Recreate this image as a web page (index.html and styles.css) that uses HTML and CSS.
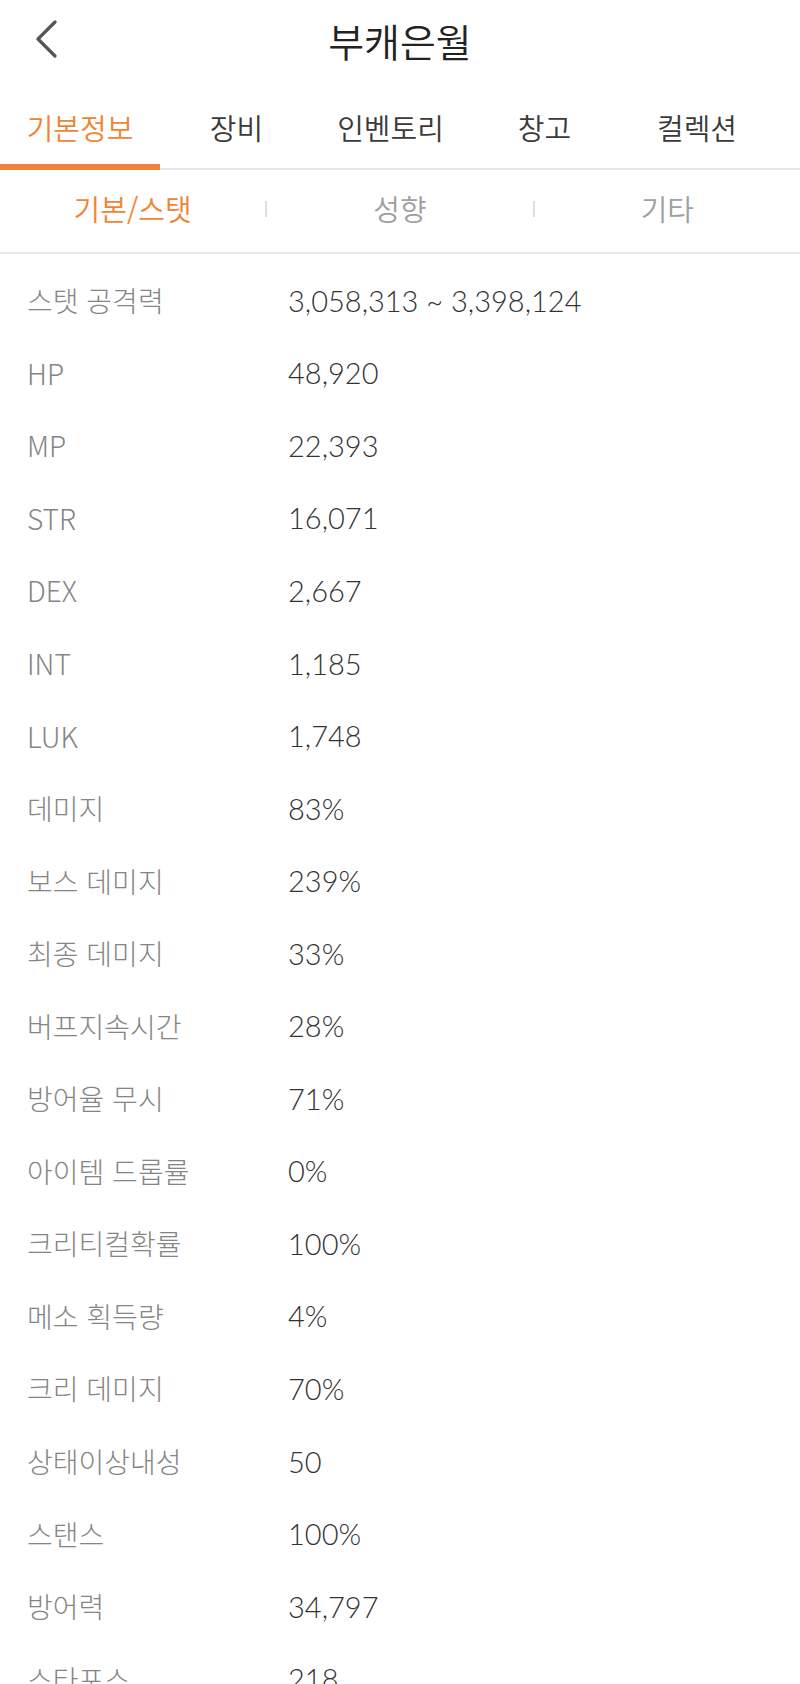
FILE: index.html
```html
<!DOCTYPE html>
<html lang="ko">
<head>
<meta charset="utf-8">
<title>부캐은월</title>
<link rel="stylesheet" href="styles.css">
</head>
<body>
<div class="app">
  <header class="header">
    <div class="back">
      <svg width="24" height="38" viewBox="0 0 24 38"><path d="M21 2 L4 19 L21 36" fill="none" stroke="#555" stroke-width="3.2" stroke-linecap="round" stroke-linejoin="round"/></svg>
    </div>
    <h1 class="title">부캐은월</h1>
    <div></div>
  </header>
  <nav class="tabs">
    <div class="tab active">기본정보</div>
    <div class="tab">장비</div>
    <div class="tab">인벤토리</div>
    <div class="tab">창고</div>
    <div class="tab">컬렉션</div>
  </nav>
  <nav class="subtabs">
    <div class="subtab active">기본/스탯</div>
    <div class="sep"></div>
    <div class="subtab">성향</div>
    <div class="sep"></div>
    <div class="subtab">기타</div>
  </nav>
  <ul class="stats">
    <li class="row"><span class="label">스탯 공격력</span><span class="value">3,058,313 ~ 3,398,124</span></li>
    <li class="row"><span class="label">HP</span><span class="value">48,920</span></li>
    <li class="row"><span class="label">MP</span><span class="value">22,393</span></li>
    <li class="row"><span class="label">STR</span><span class="value">16,071</span></li>
    <li class="row"><span class="label">DEX</span><span class="value">2,667</span></li>
    <li class="row"><span class="label">INT</span><span class="value">1,185</span></li>
    <li class="row"><span class="label">LUK</span><span class="value">1,748</span></li>
    <li class="row"><span class="label">데미지</span><span class="value">83%</span></li>
    <li class="row"><span class="label">보스 데미지</span><span class="value">239%</span></li>
    <li class="row"><span class="label">최종 데미지</span><span class="value">33%</span></li>
    <li class="row"><span class="label">버프지속시간</span><span class="value">28%</span></li>
    <li class="row"><span class="label">방어율 무시</span><span class="value">71%</span></li>
    <li class="row"><span class="label">아이템 드롭률</span><span class="value">0%</span></li>
    <li class="row"><span class="label">크리티컬확률</span><span class="value">100%</span></li>
    <li class="row"><span class="label">메소 획득량</span><span class="value">4%</span></li>
    <li class="row"><span class="label">크리 데미지</span><span class="value">70%</span></li>
    <li class="row"><span class="label">상태이상내성</span><span class="value">50</span></li>
    <li class="row"><span class="label">스탠스</span><span class="value">100%</span></li>
    <li class="row"><span class="label">방어력</span><span class="value">34,797</span></li>
    <li class="row"><span class="label">스타포스</span><span class="value">218</span></li>
  </ul>
</div>
</body>
</html>
```
FILE: styles.css
```css
html, body {
  margin: 0;
  padding: 0;
  background: #fff;
}
body {
  font-family: "Noto Sans CJK KR", "Noto Sans", sans-serif;
  color: #333;
}
.app {
  width: 800px;
  height: 1684px;
  overflow: hidden;
  background: #fff;
}
.header {
  height: 84px;
  display: grid;
  grid-template-columns: 1fr auto 1fr;
  align-items: center;
}
.back {
  padding-left: 34px;
  padding-bottom: 6px;
  display: flex;
  align-items: center;
}
.back svg { display: block; }
.title {
  margin: 0;
  font-size: 39px;
  font-weight: 350;
  color: #222;
  line-height: 1;
  padding-bottom: 4px;
}
.tabs {
  display: grid;
  grid-template-columns: 160px 153px 155px 153px 152px;
  height: 86px;
  box-shadow: inset 0 -2px 0 #e6e6e6;
}
.tab {
  display: flex;
  align-items: center;
  justify-content: center;
  font-size: 29px;
  font-weight: 350;
  color: #3a3a3a;
  padding-top: 6px;
  box-sizing: border-box;
  border-bottom: 6px solid transparent;
}
.tab.active {
  color: #ef8534;
  border-bottom-color: #f0843a;
}
.subtabs {
  height: 82px;
  display: flex;
  align-items: center;
  border-bottom: 2px solid #e8e8e8;
}
.subtab {
  flex: 1;
  text-align: center;
  font-size: 29px;
  font-weight: 350;
  color: #a0a0a0;
  padding-bottom: 6px;
}
.subtab.active {
  color: #ef8534;
}
.sep {
  width: 2px;
  height: 16px;
  margin-bottom: 4px;
  background: #dedede;
}
.stats {
  list-style: none;
  margin: 0;
  padding: 10px 0 0;
}
.row {
  height: 72.55px;
  display: flex;
  align-items: center;
  font-size: 28px;
}
.label {
  width: 261px;
  padding-left: 27px;
  color: #858585;
  font-weight: 300;
}
.value {
  color: #333;
  font-family: "Lato", "Noto Sans CJK KR", sans-serif;
  font-weight: 300;
  font-size: 29px;
}
```
